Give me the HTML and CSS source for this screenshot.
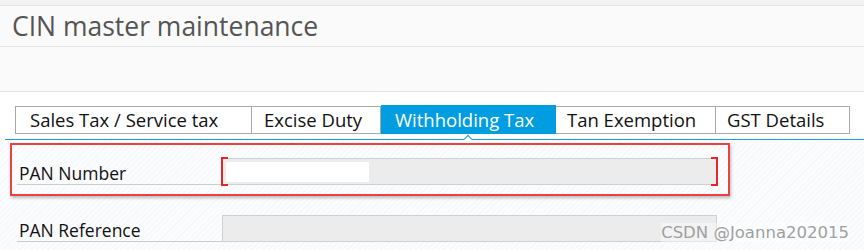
FILE: index.html
```html
<!DOCTYPE html>
<html lang="en">
<head>
  <meta charset="UTF-8">
  <title>CIN master maintenance</title>
  <link rel="stylesheet" href="styles.css">
</head>
<body>
  <div class="top-strip"></div>
  <div class="title-bar">CIN master maintenance</div>
  <div class="toolbar"></div>

  <div class="tabs">
    <div class="tab tab-sales">Sales Tax / Service tax</div>
    <div class="tab tab-excise">Excise Duty</div>
    <div class="tab tab-wht active">Withholding Tax</div>
    <div class="tab tab-tan">Tan Exemption</div>
    <div class="tab tab-gst">GST Details</div>
  </div>
  <div class="tab-line"><span class="notch"></span></div>

  <div class="content">
    <div class="highlight">
      <div class="field-row">
        <div class="label">PAN Number</div>
        <div class="input">
          <span class="bracket left"></span>
          <span class="filled"></span>
          <span class="bracket right"></span>
        </div>
      </div>
    </div>
    <div class="field-row second">
      <div class="label">PAN Reference</div>
      <div class="input"></div>
    </div>
    <div class="watermark">CSDN @Joanna202015</div>
  </div>
</body>
</html>
```

FILE: styles.css
```css
body {
  margin: 0;
  width: 864px;
  height: 250px;
  overflow: hidden;
  font-family: "Open Sans", "DejaVu Sans", sans-serif;
  background: #fff;
  position: relative;
}
.top-strip {
  height: 5px;
  background: #f2f2f2;
  border-bottom: 1px solid #e4e4e4;
}
.title-bar {
  height: 40px;
  line-height: 41px;
  padding-left: 12px;
  background: #fafafa;
  border-bottom: 1px solid #e4e4e4;
  color: #555;
  font-size: 26.5px;
}
.toolbar {
  height: 44px;
  background: #fafafa;
  border-bottom: 1px solid #e2e2e2;
}
.tabs {
  display: flex;
  margin: 14px 0 0 15px;
  height: 28px;
}
.tab {
  box-sizing: border-box;
  height: 28px;
  line-height: 25px;
  border: 1px solid #aaa;
  border-left: none;
  font-size: 18.5px;
  color: #111;
  background: #fff;
  white-space: nowrap;
}
.tab-sales { width: 237px; padding-left: 14px; border-left: 1px solid #aaa; }
.tab-excise { width: 129px; padding-left: 12px; }
.tab-wht { width: 175px; padding-left: 14px; }
.tab-tan { width: 160px; padding-left: 11px; }
.tab-gst { width: 134px; padding-left: 11px; }
.tab.active {
  background: #009de0;
  border-color: #009de0;
  color: #fff;
  height: 29px;
  margin-top: -1px;
  line-height: 27px;
}
.tab-line {
  position: relative;
  margin: 5px 0 0 5px;
  border-bottom: 1px solid #1a9be0;
}
.notch {
  position: absolute;
  left: 460px;
  top: -3px;
  width: 5px;
  height: 5px;
  background: #fff;
  border-top: 1px solid #1a9be0;
  border-left: 1px solid #1a9be0;
  transform: rotate(45deg);
}
.content {
  height: 110px;
  padding: 3px 0 0 10px;
  background: repeating-linear-gradient(135deg, #fbfcfd 0 3px, #f5f7f9 3px 4px);
}
.highlight {
  width: 711px;
  padding: 13px 0 9px 5px;
  border: 2px solid #ec4044;
  box-shadow: 1px 2px 3px rgba(0, 0, 0, 0.25);
}
.field-row {
  display: flex;
  align-items: flex-end;
}
.field-row.second {
  margin: 19px 0 0 7px;
}
.label {
  box-sizing: border-box;
  width: 205px;
  height: 27px;
  line-height: 30px;
  padding-left: 2px;
  font-size: 17.5px;
  color: #111;
  border-bottom: 1px solid #ccc;
  white-space: nowrap;
  overflow: hidden;
}
.input {
  position: relative;
  box-sizing: border-box;
  width: 495px;
  height: 27px;
  background: #ececec;
  border: 1px solid #d0d0d0;
}
.filled {
  position: absolute;
  left: 3px;
  top: 3px;
  width: 143px;
  height: 20px;
  background: #fff;
}
.bracket {
  position: absolute;
  top: -2px;
  width: 5px;
  height: 25px;
  border-top: 2px solid #e8262a;
  border-bottom: 2px solid #e8262a;
}
.bracket.left {
  left: -2px;
  border-left: 2px solid #e8262a;
}
.bracket.right {
  right: -2px;
  border-right: 2px solid #e8262a;
}
.watermark {
  position: absolute;
  right: 15px;
  bottom: 8px;
  font-family: "DejaVu Sans", sans-serif;
  font-size: 16.5px;
  color: #a0a0a0;
  background: rgba(255, 255, 255, 0.4);
}
```
